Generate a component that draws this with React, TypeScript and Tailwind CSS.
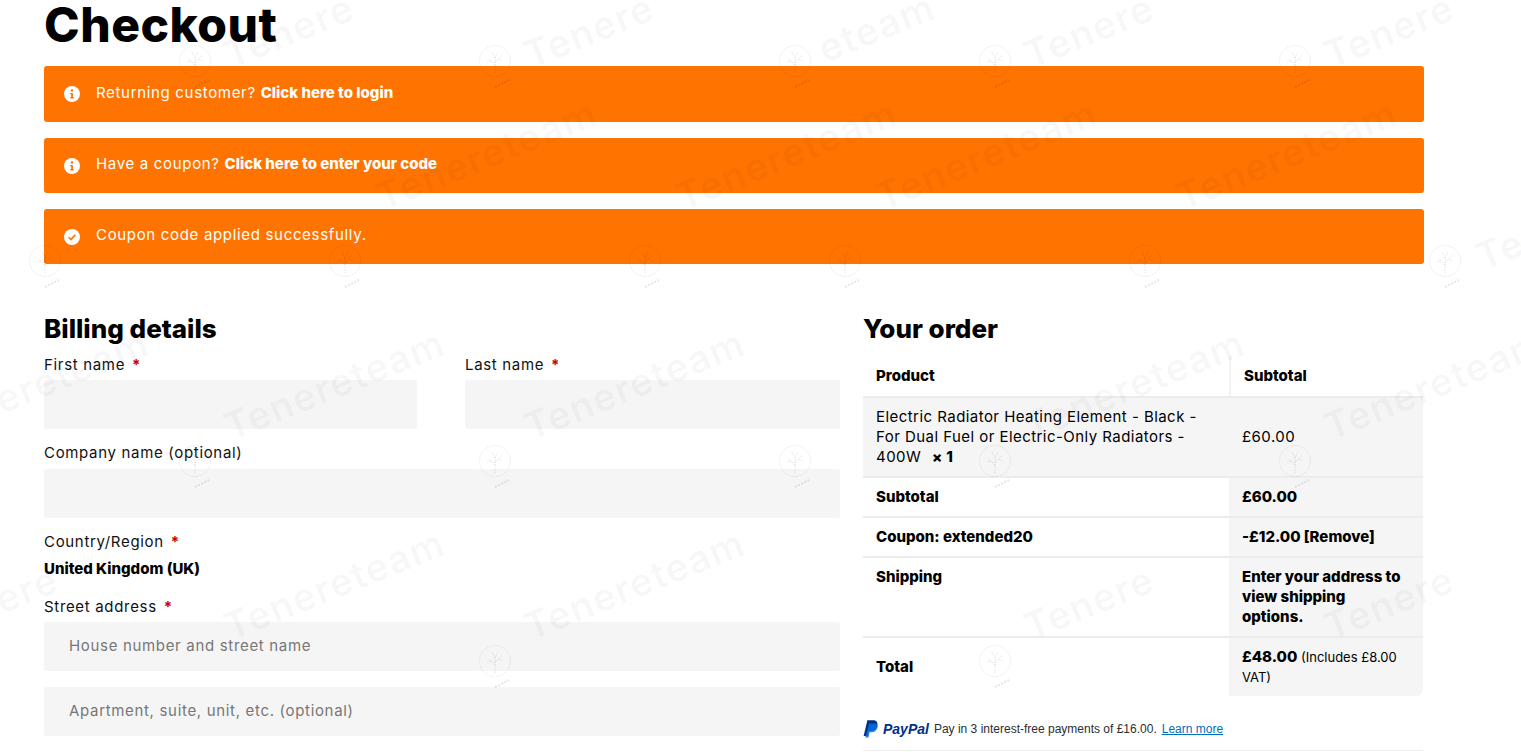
const fontStack = "font-['Inter',_'Liberation_Sans',_sans-serif]";

const logos = [
  [197, 65], [497, 65], [797, 65], [997, 65], [1297, 65],
  [47, 265], [347, 265], [647, 265], [847, 265], [1147, 265], [1447, 265],
  [197, 465], [497, 465], [797, 465], [997, 465], [1297, 465],
  [497, 665], [997, 665],
];

const marks: [number, number, string][] = [
  [226, 28, 'Tenere'], [526, 28, 'Tenere'], [820, 22, 'eteam'], [1026, 28, 'Tenere'], [1326, 28, 'Tenere'],
  [378, 170, 'Tenereteam'], [678, 170, 'Tenereteam'], [878, 170, 'Tenereteam'], [1178, 170, 'Tenereteam'], [1478, 230, 'Te'],
  [-70, 400, 'Tenereteam'], [226, 400, 'Tenereteam'], [526, 400, 'Tenereteam'], [1026, 400, 'Tenereteam'], [1326, 400, 'Tenereteam'],
  [-70, 600, 'Tenere'], [226, 600, 'Tenereteam'], [526, 600, 'Tenereteam'], [1026, 600, 'Tenere'], [1326, 600, 'Tenere'],
];

const Watermark = () => (
  <div className="absolute inset-0 overflow-hidden pointer-events-none">
    {marks.map(([x, y, t], i) => (
      <span
        key={i}
        className="absolute text-[38px] font-semibold tracking-[0.04em] text-black/[0.04] -rotate-[22deg] origin-left whitespace-nowrap"
        style={{ left: x, top: y }}
      >
        {t}
      </span>
    ))}
    {logos.map(([x, y], i) => (
      <svg
        key={i}
        viewBox="0 0 40 50"
        className="absolute w-10 h-[50px] text-black/10"
        style={{ left: x - 20, top: y - 22 }}
        fill="none"
        stroke="currentColor"
      >
        <circle cx="18" cy="18" r="15.5" strokeDasharray="1 1" />
        <path d="M18 30V16M18 22l-7-7M18 20l7-8M14 18l-4 1M22 16l4 2M18 15l-3-6M18 15l3-6" strokeDasharray="1.5 1" />
        <path d="M18 44l14-7" strokeWidth="2" strokeDasharray="2 1.5" />
      </svg>
    ))}
  </div>
);

const InfoIcon = () => (
  <svg viewBox="0 0 16 16" className="w-4 h-4 shrink-0">
    <circle cx="8" cy="8" r="8" fill="#fff" />
    <rect x="6.8" y="3.4" width="2.2" height="2.2" fill="#ff7300" />
    <path d="M6.2 7h2.7v4.2h1v1.2H6.2v-1.2h1V8.2h-1z" fill="#ff7300" />
  </svg>
);

const CheckIcon = () => (
  <svg viewBox="0 0 16 16" className="w-4 h-4 shrink-0">
    <circle cx="8" cy="8" r="8" fill="#fff" />
    <path d="M4.6 8.2l2.3 2.3 4.4-4.6" fill="none" stroke="#ff7300" strokeWidth="1.6" />
  </svg>
);

const Notice = ({ icon, className, children }: { icon: React.ReactNode; className: string; children: React.ReactNode }) => (
  <div className={`flex items-center gap-4 pl-5 bg-[#ff7300] rounded-[3px] text-white text-[15px] tracking-[0.045em] ${className}`}>
    {icon}
    <p className="-mt-0.5">{children}</p>
  </div>
);

const Req = () => <span className="text-[#c00] font-bold ml-0.5">*</span>;

const Label = ({ children }: { children: React.ReactNode }) => (
  <label className="block text-[15px] leading-[22px] text-[#111] tracking-[0.045em]">{children}</label>
);

const Field = ({ placeholder, className = '' }: { placeholder?: string; className?: string }) => (
  <div className={`h-[49px] bg-[#f5f5f5] rounded-[3px] px-[25px] flex items-center text-[15px] tracking-[0.045em] text-[#777] ${className}`}>
    {placeholder}
  </div>
);

const rowLine = 'border-t-2 border-[#ececec]';

const PayPalMark = () => (
  <svg viewBox="0 0 24 28" className="w-[15px] h-[18px] shrink-0">
    <path d="M7 0h9c5 0 8 3 7 8-1 6-5 9-10 9H9l-1.5 8H1z" fill="#003087" />
    <path d="M10 5h9c4 0 5 3 4.400 6-1 5-5 8-10 8h-3l-1.500 8.500H3.500z" fill="#0070e0" opacity="0.85" />
  </svg>
);

const App = () => (
  <div className={`relative h-[752px] overflow-hidden bg-white text-black ${fontStack}`}>
    <main className="w-[1380px] ml-11">
      <h1 className="h-[66px] text-[48px] leading-[50px] font-extrabold tracking-[0.01em]">Checkout</h1>

      <div className="flex flex-col gap-4">
        <Notice icon={<InfoIcon />} className="h-14">
          Returning customer? <strong className="font-extrabold tracking-normal">Click here to login</strong>
        </Notice>
        <Notice icon={<InfoIcon />} className="h-[55px]">
          Have a coupon? <strong className="font-extrabold tracking-normal">Click here to enter your code</strong>
        </Notice>
        <Notice icon={<CheckIcon />} className="h-[55px]">Coupon code applied successfully.</Notice>
      </div>

      <div className="grid grid-cols-[796px_560px] gap-x-[23px] mt-[48px]">
        <section>
          <h2 className="text-[26px] leading-[34px] font-extrabold">Billing details</h2>
          <div className="grid grid-cols-[373px_375px] gap-x-[48px] mt-[8px]">
            <div>
              <Label>First name <Req /></Label>
              <Field className="mt-1" />
            </div>
            <div>
              <Label>Last name <Req /></Label>
              <Field className="mt-1" />
            </div>
          </div>
          <div className="mt-[13px]">
            <Label>Company name (optional)</Label>
            <Field className="mt-[5px]" />
          </div>
          <div className="mt-[13px]">
            <Label>Country/Region <Req /></Label>
            <p className="mt-[5px] text-[15px] leading-[22px] font-extrabold">United Kingdom (UK)</p>
          </div>
          <div className="mt-[16px]">
            <Label>Street address <Req /></Label>
            <Field className="mt-1" placeholder="House number and street name" />
            <Field className="mt-4" placeholder="Apartment, suite, unit, etc. (optional)" />
          </div>
        </section>

        <section>
          <h2 className="text-[26px] leading-[34px] font-extrabold">Your order</h2>
          <div className="mt-[10px] w-[560px] grid grid-cols-[366px_194px] text-[15px] leading-[20px] rounded-md overflow-hidden">
            <div className="h-10 px-[13px] flex items-center font-extrabold">Product</div>
            <div className="h-10 px-[13px] flex items-center font-extrabold border-l-2 border-[#f3f3f3]">Subtotal</div>

            <div className={`h-20 px-[13px] flex items-center bg-[#f5f5f5] ${rowLine}`}>
              <p className="tracking-[0.03em]">
                Electric Radiator Heating Element - Black - For Dual Fuel or Electric-Only Radiators - 400W <strong className="font-extrabold ml-1.5">× 1</strong>
              </p>
            </div>
            <div className={`h-20 px-[13px] flex items-center bg-[#f5f5f5] tracking-[0.03em] ${rowLine}`}>£60.00</div>

            <div className={`h-10 px-[13px] flex items-center font-extrabold ${rowLine}`}>Subtotal</div>
            <div className={`h-10 px-[13px] flex items-center font-extrabold bg-[#f5f5f5] ${rowLine}`}>£60.00</div>

            <div className={`h-10 px-[13px] flex items-center font-extrabold ${rowLine}`}>Coupon: extended20</div>
            <div className={`h-10 px-[13px] flex items-center font-extrabold bg-[#f5f5f5] ${rowLine}`}>-£12.00 [Remove]</div>

            <div className={`h-20 px-[13px] pt-[9px] font-extrabold ${rowLine}`}>Shipping</div>
            <div className={`h-20 px-[13px] pt-[9px] font-extrabold bg-[#f5f5f5] ${rowLine}`}>Enter your address to view shipping options.</div>

            <div className={`h-[60px] px-[13px] flex items-center font-extrabold ${rowLine}`}>Total</div>
            <div className={`h-[60px] px-[13px] pt-[9px] bg-[#f5f5f5] text-[13px] ${rowLine}`}>
              <strong className="text-[15px] font-extrabold">£48.00</strong> (Includes £8.00 VAT)
            </div>
          </div>

          <div className="mt-[23px] flex items-center h-[20px] font-['Liberation_Sans',_sans-serif] text-[12px] text-[#2c2e2f]">
            <PayPalMark />
            <span className="ml-[5px] text-[14px] font-bold italic text-[#003087]">PayPal</span>
            <span className="ml-[5px]">Pay in 3 interest-free payments of £16.00.</span>
            <span className="ml-[5px] text-[#0070ba] underline">Learn more</span>
          </div>
          <div className="mt-[11px] border-t border-[#eee]" />
        </section>
      </div>
    </main>
    <Watermark />
  </div>
);

export default App;
